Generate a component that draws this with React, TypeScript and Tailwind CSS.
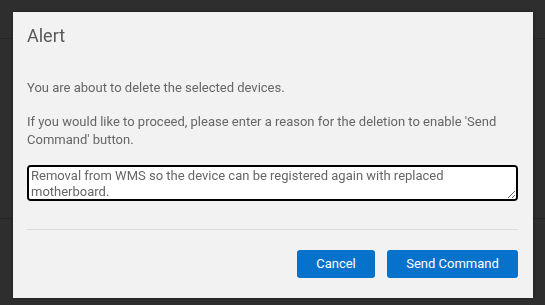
import React from "react";

export default function App() {
  return (
    <div
      className="relative w-[545px] h-[305px] overflow-hidden bg-[#2e2e2e]"
      style={{ fontFamily: "Roboto, 'Liberation Sans', sans-serif" }}
    >
      {/* faint background content behind the overlay */}
      <div className="absolute left-0 top-[38px] w-full h-[1px] bg-[#252525]" />
      <div className="absolute left-0 top-[218px] w-full h-[1px] bg-[#242424]" />

      <div className="relative ml-[13px] mt-[12px] w-[520px] h-[286px] bg-[#f2f2f2] px-[14px] pt-[12px] shadow-[0_0_3px_rgba(0,0,0,0.4)]">
        <div className="text-[18px] leading-[24px] text-[#595959]">Alert</div>
        <p className="mt-[31px] text-[13px] leading-[18px] text-[#666666]">
          You are about to delete the selected devices.
        </p>
        <p className="mt-[16px] text-[13px] leading-[18px] text-[#666666]">
          If you would like to proceed, please enter a reason for the deletion to enable 'Send Command' button.
        </p>
        <textarea
          className="mt-[16px] block w-[491px] h-[36px] border-2 border-black rounded-[4px] bg-white px-[2px] pt-[1px] text-[13px] leading-[16px] text-[#666666] outline-none"
          defaultValue="Removal from WMS so the device can be registered again with replaced motherboard."
        />
        <div className="mt-[28px] h-[1px] w-[491px] bg-[#dcdcdc]" />
        <div className="mt-[20px] flex justify-end gap-[12px] pr-[1px]">
          <button className="w-[78px] h-[28px] rounded-[3px] bg-[#0672cb] text-white text-[13px]">
            Cancel
          </button>
          <button className="w-[131px] h-[28px] rounded-[3px] bg-[#0672cb] text-white text-[13px]">
            Send Command
          </button>
        </div>
      </div>
    </div>
  );
}
